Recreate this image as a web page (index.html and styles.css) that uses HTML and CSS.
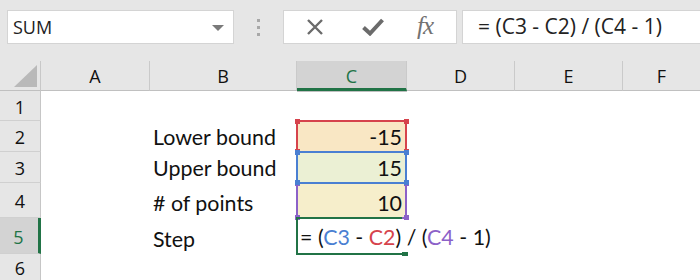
FILE: index.html
```html
<!DOCTYPE html>
<html lang="en">

<head>
    <meta charset="utf-8" />
    <title>Step formula</title>
    <link rel="stylesheet" href="styles.css">
</head>

<body>
    <div class="toolbar">
        <div class="namebox">
            <span class="name">SUM</span>
            <svg class="drop" width="12" height="6" viewBox="0 0 12 6"><path d="M0 0 L12 0 L6 6 Z" fill="#7a7a7a" /></svg>
        </div>
        <div class="grip"><i></i><i></i><i></i></div>
        <div class="buttons">
            <svg class="btn_x" width="18" height="18" viewBox="0 0 18 18">
                <path d="M2 2 L16 16 M16 2 L2 16" stroke="#6b6b6b" stroke-width="2.4" fill="none" />
            </svg>
            <svg class="btn_ok" width="22" height="18" viewBox="0 0 22 18">
                <path d="M1.5 9.5 L8 15.5 L20.5 2" stroke="#6b6b6b" stroke-width="4" fill="none" stroke-linejoin="miter" />
            </svg>
            <span class="fx">fx</span>
        </div>
        <div class="formula">= (C3 - C2) / (C4 - 1)</div>
    </div>

    <div class="sheet">
        <div class="corner"></div>
        <div class="colhead">A</div>
        <div class="colhead">B</div>
        <div class="colhead active">C</div>
        <div class="colhead">D</div>
        <div class="colhead">E</div>
        <div class="colhead last">F</div>

        <div class="rowhead">1</div>
        <div class="cell"></div><div class="cell"></div><div class="cell"></div><div class="cell"></div><div class="cell"></div><div class="cell"></div>

        <div class="rowhead">2</div>
        <div class="cell"></div>
        <div class="cell label">Lower bound</div>
        <div class="cell num ref ref_red">-15<i class="h tl"></i><i class="h tr"></i><i class="h bl"></i><i class="h br"></i></div>
        <div class="cell"></div><div class="cell"></div><div class="cell"></div>

        <div class="rowhead">3</div>
        <div class="cell"></div>
        <div class="cell label">Upper bound</div>
        <div class="cell num ref ref_blue">15<i class="h tl"></i><i class="h tr"></i><i class="h bl"></i><i class="h br"></i></div>
        <div class="cell"></div><div class="cell"></div><div class="cell"></div>

        <div class="rowhead">4</div>
        <div class="cell"></div>
        <div class="cell label"># of points</div>
        <div class="cell num ref ref_purple">10<i class="h tl"></i><i class="h tr"></i><i class="h bl"></i><i class="h br"></i></div>
        <div class="cell"></div><div class="cell"></div><div class="cell"></div>

        <div class="rowhead active">5</div>
        <div class="cell"></div>
        <div class="cell label">Step</div>
        <div class="cell edit">
            <span class="edit_text">= (<b class="c_blue">C3</b> - <b class="c_red">C2</b>) / (<b class="c_purple">C4</b> - 1)</span>
            <i class="fill_handle"></i>
        </div>
        <div class="cell"></div><div class="cell"></div><div class="cell"></div>

        <div class="rowhead">6</div>
        <div class="cell"></div><div class="cell"></div><div class="cell"></div><div class="cell"></div><div class="cell"></div><div class="cell"></div>
    </div>
</body>

</html>
```

FILE: styles.css
```css
* {
    box-sizing: border-box;
}

html,
body {
    padding: 0;
    margin: 0;
    width: 100%;
    height: 100%;
    overflow: hidden;
    background-color: #fff;
}

.toolbar {
    height: 61px;
    background-color: #e6e6e6;
    display: flex;
    align-items: flex-start;
    padding: 10px 0 0 7px;
    font-family: "Open Sans", "Noto Sans", sans-serif;
}

.namebox {
    width: 227px;
    height: 34px;
    background-color: #fff;
    border: 1px solid #d4d4d4;
    display: flex;
    align-items: center;
    justify-content: space-between;
    padding: 0 9px 0 5px;
}

.name {
    font-size: 18px;
    color: #222;
}

.drop {
    margin-top: 1px;
}

.grip {
    width: 49px;
    height: 34px;
    display: flex;
    flex-direction: column;
    align-items: center;
    justify-content: center;
    gap: 4px;
}

.grip i {
    width: 3px;
    height: 3px;
    background-color: #a8a8a8;
}

.buttons {
    width: 174px;
    height: 34px;
    background-color: #fff;
    border: 1px solid #d4d4d4;
    display: flex;
    align-items: center;
    padding-left: 22px;
}

.btn_ok {
    margin-left: 38px;
}

.fx {
    margin-left: 33px;
    font-family: "Liberation Serif", "DejaVu Serif", serif;
    font-style: italic;
    font-size: 25px;
    color: #727272;
    letter-spacing: -1px;
    margin-top: -3px;
}

.formula {
    flex: 1;
    height: 34px;
    margin-left: 5px;
    background-color: #fff;
    border: 1px solid #d4d4d4;
    border-right: none;
    padding-left: 15px;
    font-size: 21px;
    line-height: 31px;
    color: #222;
    white-space: nowrap;
}

.sheet {
    display: grid;
    grid-template-columns: 41px 109px 147px 110px 108px 108px 1fr;
    grid-template-rows: 30px 30px 31px 31px 35px 36px 1fr;
    height: calc(100% - 61px);
    font-family: "Lato", "Open Sans", sans-serif;
}

.corner {
    background-color: #e6e6e6;
    border-right: 1px solid #c8c8c8;
    border-bottom: 1px solid #c0c0c0;
    position: relative;
}

.corner::after {
    content: "";
    position: absolute;
    right: 3px;
    bottom: 3px;
    width: 0;
    height: 0;
    border-left: 23px solid transparent;
    border-bottom: 22px solid #b9b9b9;
}

.colhead {
    background-color: #e6e6e6;
    border-right: 1px solid #cacaca;
    border-bottom: 1px solid #c0c0c0;
    font-family: "Open Sans", "Noto Sans", sans-serif;
    font-size: 18px;
    color: #111;
    text-align: center;
    line-height: 30px;
}

.colhead.active {
    background-color: #d3d3d3;
    color: #217346;
    border-bottom: 3px solid #217346;
    box-shadow: 0 1px 0 #c0c0c0;
}

.colhead.last {
    border-right: none;
}

.rowhead {
    background-color: #e6e6e6;
    border-right: 1px solid #c6c6c6;
    border-bottom: 1px solid #d0d0d0;
    font-family: "Open Sans", "Noto Sans", sans-serif;
    font-size: 18px;
    color: #111;
    display: flex;
    align-items: center;
    justify-content: center;
    padding-top: 2px;
}

.rowhead.active {
    background-color: #d3d3d3;
    color: #217346;
    border-right: 3px solid #217346;
    padding-right: 1px;
}

.cell {
    position: relative;
    font-size: 21.4px;
    color: #111;
    display: flex;
    align-items: flex-end;
    padding: 0 3px 2px 3px;
    white-space: nowrap;
}

.num {
    justify-content: flex-end;
    padding-right: 5px;
}

.ref::after {
    content: "";
    position: absolute;
    left: -1px;
    right: 0;
    top: -1px;
    bottom: -1px;
    border: 2px solid;
    pointer-events: none;
}

.ref_red {
    background-color: #f9e7c4;
    z-index: 1;
}

.ref_red::after {
    border-color: #d6434c;
}

.ref_blue {
    background-color: #ebf0d4;
    z-index: 3;
}

.ref_blue::after {
    border-color: #4a7fd2;
}

.ref_purple {
    background-color: #f6eecb;
    z-index: 2;
}

.ref_purple::after {
    border-color: #8c61c8;
}

.h {
    position: absolute;
    width: 5px;
    height: 5px;
    z-index: 2;
}

.ref_red .h {
    background-color: #d6434c;
}

.ref_blue .h {
    background-color: #4a7fd2;
}

.ref_purple .h {
    background-color: #8c61c8;
}

.tl {
    left: -2px;
    top: -2px;
}

.tr {
    right: -2px;
    top: -2px;
}

.bl {
    left: -2px;
    bottom: -2px;
}

.br {
    right: -2px;
    bottom: -2px;
}

.edit {
    overflow: visible;
    z-index: 4;
    padding-bottom: 4px;
}

.edit::after {
    content: "";
    position: absolute;
    left: -1px;
    top: -1px;
    right: 5px;
    bottom: -1px;
    border: 2px solid #217346;
    border-right: none;
    pointer-events: none;
}

.edit_text b {
    font-weight: normal;
}

.c_blue {
    color: #4a7fd2;
}

.c_red {
    color: #d6434c;
}

.c_purple {
    color: #8c61c8;
}

.fill_handle {
    position: absolute;
    right: -1px;
    bottom: -2px;
    width: 6px;
    height: 4px;
    background-color: #217346;
}
```
